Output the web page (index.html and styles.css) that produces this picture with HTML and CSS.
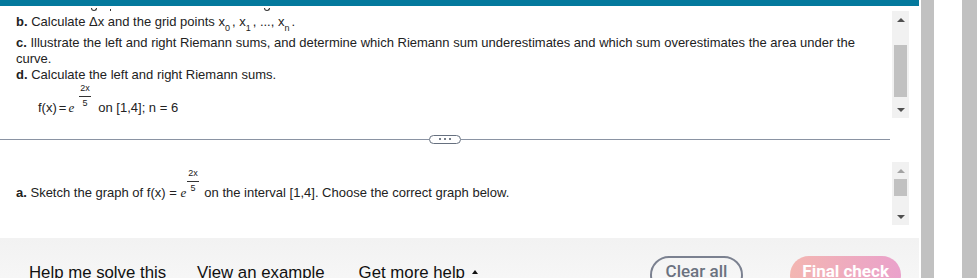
FILE: index.html
```html
<!DOCTYPE html>
<html>
<head>
<meta charset="utf-8">
<link rel="stylesheet" href="styles.css">
</head>
<body>
<div class="page">
  <div class="main">
    <div class="topbar"></div>
    <div class="qarea">
      <div class="qtext">
        <div class="line-b"><b>b.</b> Calculate <span class="acc">Δ<i class="breve"></i></span>x <span class="acc">a<i class="dot"></i></span>nd the grid points x<sub>0</sub><span class="thin"></span>, x<sub>1</sub><span class="thin"></span>, <span class="acc">...<i class="breve b2"></i></span>, x<sub>n</sub><span class="thin"></span>.</div>
        <div><b>c.</b> Illustrate the left and right Riemann sums, and determine which Riemann sum underestimates and which sum overestimates the area under the curve.</div>
        <div><b>d.</b> Calculate the left and right Riemann sums.</div>
        <div class="formula">f(x)<span class="eq">=</span><span class="e">e</span><span class="frac"><span class="num">2x</span><span class="den">5</span></span> on [1,4]; n = 6</div>
      </div>
      <div class="vscroll s1">
        <div class="sb-btn"><span class="tri-up"></span></div>
        <div class="sb-track"><div class="thumb"></div></div>
        <div class="sb-btn"><span class="tri-down"></span></div>
      </div>
    </div>
    <div class="sep"><span class="pill"><i></i><i></i><i></i></span></div>
    <div class="aarea">
      <div class="atext"><b>a.</b> Sketch the graph of f(x) = <span class="e">e</span><span class="frac"><span class="num">2x</span><span class="den">5</span></span> on the interval [1,4]. Choose the correct graph below.</div>
      <div class="vscroll s2">
        <div class="sb-btn"><span class="tri-up light"></span></div>
        <div class="sb-track"><div class="thumb"></div></div>
        <div class="sb-btn"><span class="tri-down"></span></div>
      </div>
    </div>
    <div class="toolbar">
      <div class="links">
        <span class="link">Help me solve this</span>
        <span class="link">View an example</span>
        <span class="link more">Get more help <span class="caret"></span></span>
      </div>
      <span class="btn clear">Clear all</span>
      <span class="btn final">Final check</span>
    </div>
  </div>
  <div class="gutter"><div class="g1"></div><div class="g2"></div><div class="g3"></div><div class="g4"></div></div>
</div>
</body>
</html>
```
FILE: styles.css
```css
html, body { margin: 0; padding: 0; background: #fff; }
body { font-family: "Liberation Sans", Arial, sans-serif; overflow: hidden; }
.page { display: flex; height: 278px; overflow: hidden; }
.main { width: 919px; display: flex; flex-direction: column; flex: none; }
.gutter { display: flex; width: 58px; flex: none; }
.g1 { width: 2px; }
.g2 { width: 13px; background: #c1c1c1; }
.g3 { width: 28px; }
.g4 { width: 15px; background: #c1c1c1; }

.topbar { height: 6px; background: #04799d; flex: none; }

.qarea { display: flex; height: 128px; padding: 5px 10px 0 16px; box-sizing: border-box; flex: none; }
.qtext { flex: 1; margin-right: 12px; padding-top: 3px; font-size: 13px; line-height: 16px; color: #222; }
.line-b { margin-bottom: 5px; }
.formula { padding-left: 22px; margin-top: 1px; }
.eq { margin: 0 2px; }
sub { font-size: 9px; vertical-align: -5px; line-height: 0; }
.thin { display: inline-block; width: 2px; }
.acc { position: relative; }
.breve { position: absolute; left: 50%; top: -6px; margin-left: -2px; width: 4px; height: 2px; border: 1px solid #333; border-top: none; border-radius: 0 0 3px 3px; }
.dot { position: absolute; left: 50%; top: -5px; margin-left: -1px; width: 1px; height: 2px; background: #333; }
.b2 { margin-left: -1px; }
.e { font-family: "Liberation Serif", "Times New Roman", serif; font-style: italic; }
.frac { display: inline-flex; flex-direction: column; align-items: center; font-size: 9px; line-height: 9px; vertical-align: 21px; margin: 0 2px 0 1px; }
.formula .frac { margin: 0 4px 0 5px; }
.num { padding: 0 1px 3px; border-bottom: 1px solid #333; }
.den { margin-top: 2px; }

.vscroll { width: 17px; background: #f1f1f1; display: flex; flex-direction: column; flex: none; }
.s1 { height: 107px; }
.s2 { height: 63px; }
.sb-btn { height: 17px; display: flex; align-items: center; justify-content: center; flex: none; }
.sb-track { flex: 1; display: flex; flex-direction: column; align-items: center; }
.thumb { width: 13px; background: #c1c1c1; }
.s1 .thumb { height: 52px; margin-top: 17px; }
.s2 .thumb { height: 17px; }
.tri-up { width: 0; height: 0; border-left: 4px solid transparent; border-right: 4px solid transparent; border-bottom: 4px solid #505050; }
.tri-up.light { border-bottom-color: #a3a3a3; }
.tri-down { width: 0; height: 0; border-left: 4px solid transparent; border-right: 4px solid transparent; border-top: 4px solid #505050; }

.sep { height: 10px; width: 890px; display: flex; align-items: center; flex: none; }
.sep::before, .sep::after { content: ""; flex: 1; height: 1px; background: #8a93a3; }
.pill { width: 32px; height: 9px; box-sizing: border-box; border: 1.5px solid #66707f; border-radius: 5px; background: #fff; display: flex; align-items: center; justify-content: center; gap: 3px; }
.pill i { width: 2px; height: 2px; background: #4b5563; border-radius: 1px; }

.aarea { display: flex; height: 94px; padding: 18px 10px 0 16px; box-sizing: border-box; flex: none; }
.atext { flex: 1; margin-right: 12px; padding-top: 7px; font-size: 13px; line-height: 16px; color: #222; }

.toolbar { flex: 1; display: flex; align-items: flex-start; padding: 18px 18px 0 29px; background: linear-gradient(#f2f2f2, #f8f8f8); }
.links { display: flex; margin-top: 7px; font-size: 16.8px; line-height: 20px; color: #111; }
.link + .link { margin-left: 31px; }
.link.more { margin-left: 34px; }
.caret { display: inline-block; width: 0; height: 0; border-left: 3px solid transparent; border-right: 3px solid transparent; border-bottom: 4px solid #111; vertical-align: 4px; margin-left: 2px; }
.btn { box-sizing: border-box; height: 38px; border-radius: 19px; font-family: Roboto, sans-serif; font-size: 17px; line-height: 26px; white-space: nowrap; }
.clear { margin-left: auto; border: 2px solid #7b8190; padding: 0 14px; color: #6b7280; font-weight: 500; }
.final { margin-left: 47px; border: 2px solid transparent; padding: 0 10px; color: #fff; font-weight: 700; background: linear-gradient(90deg, #f3b6b1, #eaa1cb); background-origin: border-box; }
```
